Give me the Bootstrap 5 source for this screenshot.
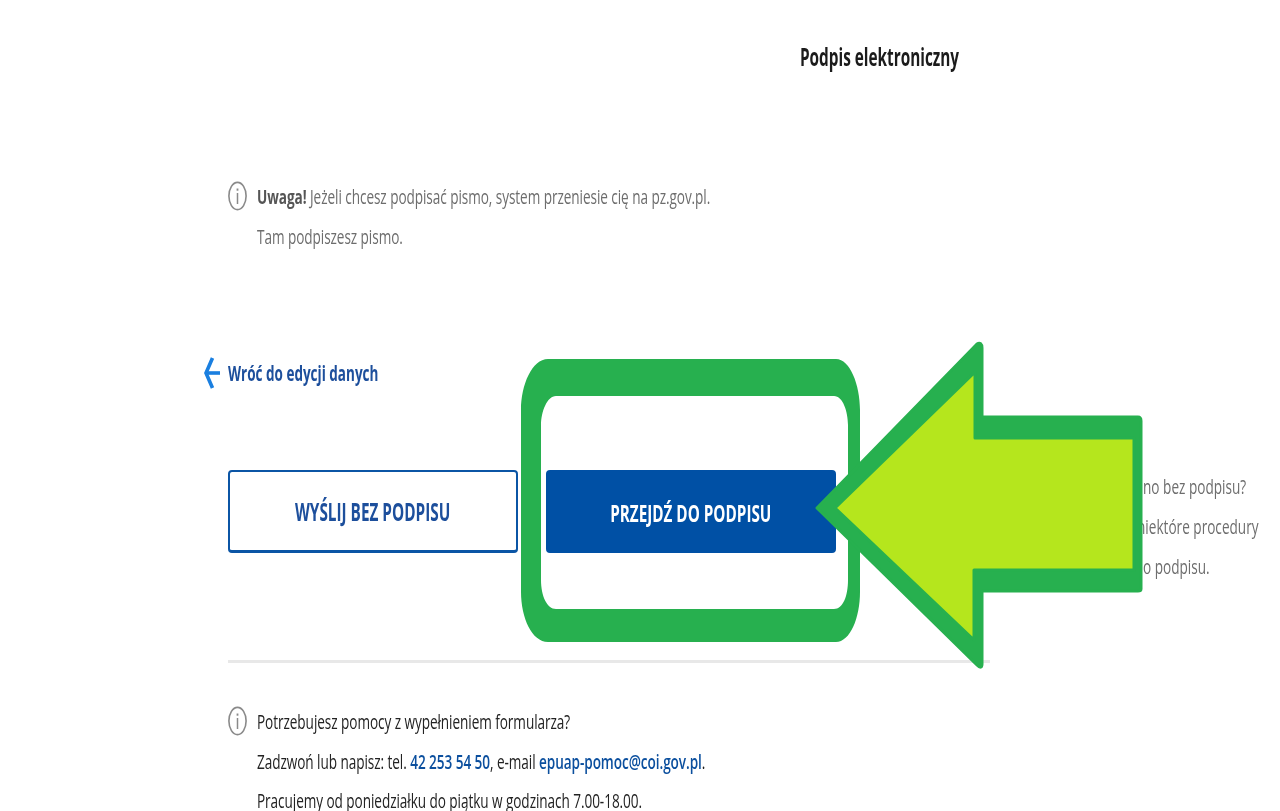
<!DOCTYPE html>
<html lang="pl">
<head>
<meta charset="utf-8">
<title>Podpis elektroniczny</title>
<link rel="stylesheet" href="https://cdn.jsdelivr.net/npm/bootstrap@5.3.0/dist/css/bootstrap.min.css">
<style>
body{font-family:"Open Sans","Liberation Sans",sans-serif;background:#fff;overflow:hidden;height:811px;position:relative}
.page-wrap{padding-left:203px;width:1280px;filter:blur(.45px)}
.squeeze{display:block;white-space:nowrap;transform:scaleX(.68);transform-origin:left center;width:max-content}
.page-title{font-size:25px;font-weight:700;color:#1b1b1b;line-height:40px;margin:36px 0 0 597px;transform:scaleX(.613)}
.indent{padding-left:25px}
.info-ico{width:19px;height:30px;flex:none;margin:4px 10px 0 0}
.copy-lines{font-size:20px;line-height:39.5px;letter-spacing:-.1px}
.notice{margin-top:101px;color:#6d6d6d}
.notice b{color:#555}
.back-row{margin-top:97px;height:40px}
.back-link{font-size:21px;font-weight:700;color:#1d4f9c;text-decoration:none;line-height:40px;transform:scaleX(.643)}
.arrow-ico{width:18px;height:36px;flex:none;margin-right:7px}
.btn-row{margin-top:77px;height:83px;width:1077px}
.action{flex:none;width:290px;height:83px;border-radius:4px;padding:2px 0 0;font-weight:700;font-size:25px;display:flex;align-items:center;justify-content:center}
.action .squeeze{transform:scaleX(.613);transform-origin:center}
.action.ghost{background:#fff;border:2px solid #0b55a5;border-bottom-width:3px;color:#1d4f9c}
.action.solid{background:#0050a5;border:2px solid #0050a5;color:#fff;font-size:24px;margin-left:28px}
.action.solid .squeeze{transform:scaleX(.636)}
.aside-text{flex:none;margin:30px 0 0 307px;color:#6d6d6d;font-size:20px;line-height:40px}
.aside-text .tucked{margin-left:-6px}
.rule{margin:107px 0 0;width:762px;border:0;border-top:3px solid #e8e8e8;opacity:1}
.help{margin-top:39px;color:#222}
.help a{color:#0b4f9e;font-weight:600;text-decoration:none}
.overlay{position:absolute;left:0;top:0;width:1280px;height:811px;pointer-events:none}
</style>
</head>
<body>
<main class="page-wrap">
  <h1 class="page-title squeeze">Podpis elektroniczny</h1>

  <div class="indent d-flex notice">
    <svg class="info-ico" viewBox="0 0 19 30" fill="none" stroke="#8a8a8a"><ellipse cx="9.5" cy="15" rx="8.6" ry="13.6" stroke-width="1.6"/><path d="M9.5 12v11" stroke-width="1.5"/><path d="M9.5 7.5v2.2" stroke-width="1.8"/></svg>
    <div class="copy-lines">
      <span class="squeeze"><b>Uwaga!</b> Jeżeli chcesz podpisać pismo, system przeniesie cię na pz.gov.pl.</span>
      <span class="squeeze">Tam podpiszesz pismo.</span>
    </div>
  </div>

  <div class="d-flex align-items-center back-row">
    <svg class="arrow-ico" viewBox="0 0 18 36" fill="none" stroke="#1a7fe0" stroke-width="3.6"><path d="M17 18H4"/><path d="M9.5 3 3 18 9.5 33"/></svg>
    <a class="back-link squeeze" href="#">Wróć do edycji danych</a>
  </div>

  <div class="indent d-flex align-items-center btn-row">
    <button class="btn action ghost" type="button"><span class="squeeze">WYŚLIJ BEZ PODPISU</span></button>
    <button class="btn action solid" type="button"><span class="squeeze">PRZEJDŹ DO PODPISU</span></button>
    <div class="aside-text">
      <span class="squeeze">no bez podpisu?</span>
      <span class="squeeze tucked">niektóre procedury</span>
      <span class="squeeze">o podpisu.</span>
    </div>
  </div>

  <div class="indent"><hr class="rule"></div>

  <div class="indent d-flex help">
    <svg class="info-ico" viewBox="0 0 19 30" fill="none" stroke="#8a8a8a"><ellipse cx="9.5" cy="15" rx="8.6" ry="13.6" stroke-width="1.6"/><path d="M9.5 12v11" stroke-width="1.5"/><path d="M9.5 7.5v2.2" stroke-width="1.8"/></svg>
    <div class="copy-lines">
      <span class="squeeze">Potrzebujesz pomocy z wypełnieniem formularza?</span>
      <span class="squeeze">Zadzwoń lub napisz: tel. <a href="#">42 253 54 50</a>, e-mail <a href="#">epuap-pomoc@coi.gov.pl</a>.</span>
      <span class="squeeze">Pracujemy od poniedziałku do piątku w godzinach 7.00-18.00.</span>
    </div>
  </div>
</main>

<svg class="overlay" viewBox="0 0 1280 811" aria-hidden="true">
  <path fill="#27b04f" fill-rule="evenodd" d="M548 359H836C850 359 860 385 860 410V592C860 618 850 642 836 642H548C532 642 521 618 521 592V410C521 385 532 359 548 359ZM556 396C547 396 541 412 541 425V580C541 596 547 609 556 609H834C843 609 848 596 848 580V425C848 412 843 396 834 396Z"/>
  <path fill="#b5e61d" d="M820 508 978 346 982 417H1140V590H982L978 666Z"/>
  <path fill="#27b04f" fill-rule="evenodd" stroke="#27b04f" stroke-width="3" stroke-linejoin="round" d="M817 508 977 344C980 342 982 344 982 348V417H1138C1140 417 1141 419 1141 421V589C1141 591 1140 591 1138 591H982V664C982 668 980 668 977 665ZM835 508 974 640V570H1134V438H975V372Z"/>
</svg>
<script src="https://cdn.jsdelivr.net/npm/bootstrap@5.3.0/dist/js/bootstrap.bundle.min.js"></script>
</body>
</html>
